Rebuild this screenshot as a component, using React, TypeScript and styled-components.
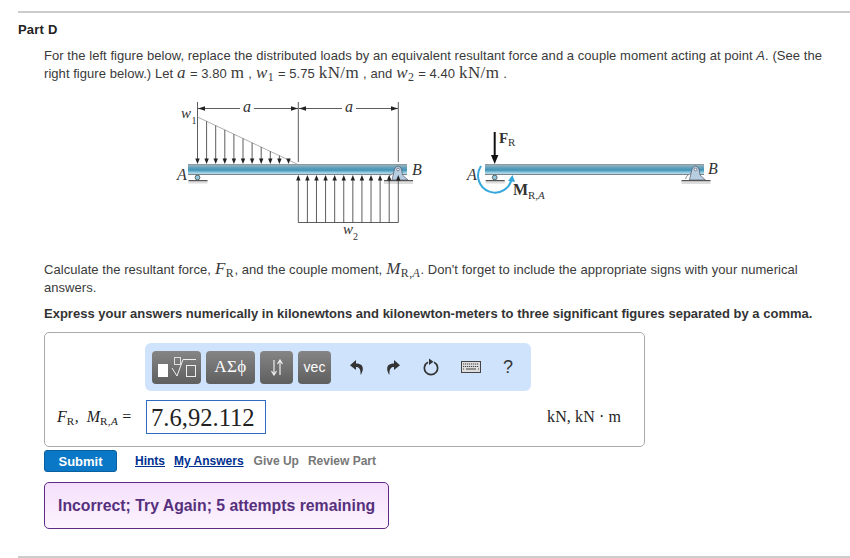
import styled, { createGlobalStyle } from "styled-components";

const GlobalStyle = createGlobalStyle`
  html, body {
    margin: 0;
    padding: 0;
    background: #fff;
    overflow: hidden;
  }
  body {
    font-family: "Liberation Sans", Arial, sans-serif;
    color: #333;
  }
`;

const Page = styled.main`
  width: 850px;
  height: 558px;
  padding: 11px 0 0 18px;
  box-sizing: border-box;
  display: flex;
  flex-direction: column;
`;

const Rule = styled.hr<{ $top?: number }>`
  margin: ${(p) => p.$top ?? 0}px 0 0;
  height: 2px;
  border: 0;
  background: #ccc;
  flex: none;
`;

const PartTitle = styled.h2`
  margin: 9px 0 0;
  font-size: 13px;
  line-height: 15px;
  font-weight: bold;
  color: #222;
  letter-spacing: 0.2px;
`;

const Body = styled.section`
  padding-left: 26px;
  display: flex;
  flex-direction: column;
  align-items: flex-start;
`;

const Paragraph = styled.p<{ $top: number; $line: number }>`
  margin: ${(p) => p.$top}px 0 0;
  width: 790px;
  font-size: 13px;
  line-height: ${(p) => p.$line}px;
  letter-spacing: 0.05px;
  color: #3a3a3a;
`;

const Instruction = styled.p`
  margin: 9px 0 0;
  font-size: 13px;
  line-height: 16px;
  font-weight: bold;
  letter-spacing: 0.01px;
  color: #333;
`;

const Math = styled.span`
  font-family: "Liberation Serif", "Times New Roman", serif;
  font-size: 17px;
  line-height: 1;
  letter-spacing: 0.4px;
  margin: 0 0.3px;
`;

const Var = styled.i`
  font-family: "Liberation Serif", "Times New Roman", serif;
`;

const Sub = styled.sub`
  font-size: 0.7em;
  line-height: 0;
  vertical-align: -0.25em;
  letter-spacing: 0.4px;
`;

const FigureSvg = styled.svg`
  display: block;
  width: 580px;
  height: 150px;
  margin: 14px 0 0 116px;
  flex: none;
`;

const EditorBox = styled.div`
  margin-top: 10px;
  width: 601px;
  height: 115px;
  box-sizing: border-box;
  border: 1px solid #aaa;
  border-radius: 5px;
  padding: 10px 23px 0 12px;
  display: flex;
  flex-direction: column;
`;

const Toolbar = styled.div`
  margin-left: 88px;
  width: 386px;
  height: 48px;
  box-sizing: border-box;
  padding: 7px;
  background: #cfe4fc;
  border-radius: 6px;
  display: flex;
  align-items: center;
`;

const ToolButton = styled.div<{ $w: number }>`
  width: ${(p) => p.$w}px;
  height: 33px;
  margin-right: 5px;
  flex: none;
  border-radius: 4px;
  background: linear-gradient(#858585, #5f5f5f);
  color: #fff;
  display: flex;
  align-items: center;
  justify-content: center;
`;

const SerifLabel = styled.span`
  font-family: "Liberation Serif", serif;
  font-size: 17px;
  letter-spacing: 0.4px;
`;

const SansLabel = styled.span`
  font-size: 14px;
`;

const ToolIcons = styled.div`
  margin-left: 2px;
  flex: 1;
  display: flex;
  justify-content: space-between;
  align-items: center;
  padding: 0 11px 0 12px;
  color: #333;
`;

const Help = styled.span`
  font-size: 18px;
  color: #333;
  width: 10px;
  text-align: center;
`;

const AnswerRow = styled.div`
  margin-top: 9px;
  display: flex;
  align-items: center;
`;

const AnswerLabel = styled.div`
  width: 89px;
  flex: none;
  font-family: "Liberation Serif", serif;
  font-size: 16px;
  white-space: nowrap;
  color: #222;
`;

const LabelGap = styled.span`
  margin-left: 4px;
`;

const AnswerInput = styled.div`
  width: 120px;
  height: 34px;
  box-sizing: border-box;
  border: 1px solid #2f6bc0;
  padding-left: 4px;
  font-family: "Liberation Serif", serif;
  font-size: 24.6px;
  line-height: 33px;
  color: #222;
`;

const Units = styled.div`
  margin-left: auto;
  font-family: "Liberation Serif", serif;
  font-size: 16px;
  letter-spacing: 0.1px;
  color: #222;
`;

const ActionRow = styled.div`
  margin-top: 3px;
  display: flex;
  align-items: center;
  font-size: 12px;
  font-weight: bold;
`;

const SubmitButton = styled.button`
  width: 73px;
  height: 22px;
  padding: 0;
  margin-right: 18px;
  border: 1px solid #0a5f9e;
  border-radius: 3px;
  background: #0b78c7;
  color: #fff;
  font: bold 13px "Liberation Sans", sans-serif;
`;

const ActionLink = styled.span<{ $active?: boolean; $gap: number }>`
  margin-right: ${(p) => p.$gap}px;
  color: ${(p) => (p.$active ? "#00308f" : "#777")};
  text-decoration: ${(p) => (p.$active ? "underline" : "none")};
`;

const Feedback = styled.div`
  margin-top: 10px;
  width: 345px;
  height: 47px;
  box-sizing: border-box;
  border: 1px solid #5f2a85;
  border-radius: 5px;
  background: linear-gradient(#f4dffb, #fdf4ff);
  padding-left: 13px;
  display: flex;
  align-items: center;
  font-size: 15.8px;
  font-weight: bold;
  color: #56307c;
  white-space: nowrap;
`;

const dimStroke = "#333";

function ArrowHead({ x, y, dir }: { x: number; y: number; dir: "up" | "down" | "left" | "right" }) {
  const points = {
    up: `${x},${y} ${x - 2.2},${y + 5.5} ${x + 2.2},${y + 5.5}`,
    down: `${x},${y} ${x - 2.2},${y - 5.5} ${x + 2.2},${y - 5.5}`,
    left: `${x},${y} ${x + 7},${y - 2.2} ${x + 7},${y + 2.2}`,
    right: `${x},${y} ${x - 7},${y - 2.2} ${x - 7},${y + 2.2}`,
  }[dir];
  return <polygon points={points} fill="#222" />;
}

function Beam({ x }: { x: number }) {
  return (
    <>
      <rect x={x} y={163} width={219} height={11} fill="url(#beam)" />
      <rect x={x} y={163} width={219} height={1} fill="#8c9aa0" />
      <rect x={x} y={173} width={219} height={1} fill="#78868c" />
    </>
  );
}

function Roller({ x }: { x: number }) {
  return (
    <>
      <circle cx={x} cy={176.5} r={2.4} fill="#8fc7dc" stroke="#333" strokeWidth={0.7} />
      <rect x={x - 9} y={179} width={19} height={1.5} fill="#555" />
      <rect x={x - 9} y={180.5} width={19} height={2} fill="#ddd" />
    </>
  );
}

function Pin({ x }: { x: number }) {
  return (
    <>
      <path d={`M${x - 10} 178 Q${x - 8} 172 ${x - 3} 173`} fill="#fff" stroke="#445" strokeWidth={0.6} />
      <path
        d={`M${x - 6} 179 L${x - 3.5} 168 Q${x} 162 ${x + 3.5} 168 L${x + 4.5} 174 L${x + 10} 179 Z`}
        fill="#b7cde0"
        stroke="#445"
        strokeWidth={0.6}
      />
      <circle cx={x} cy={168.5} r={1.3} fill="#fff" stroke="#445" strokeWidth={0.6} />
      <rect x={x - 14} y={179} width={29} height={1.5} fill="#555" />
      <rect x={x - 14} y={180.5} width={29} height={2.5} fill="#ddd" />
    </>
  );
}

const downXs = Array.from({ length: 11 }, (_, i) => 197.5 + i * 9.1);
const upXs = Array.from({ length: 12 }, (_, i) => 298.3 + i * 9.09);

function Figure() {
  return (
    <FigureSvg viewBox="160 95 580 150">
      <defs>
        <linearGradient id="beam" x1="0" y1="0" x2="0" y2="1">
          <stop offset="0" stopColor="#a9bcc4" />
          <stop offset="0.3" stopColor="#6ba3ba" />
          <stop offset="0.55" stopColor="#3f93b8" />
          <stop offset="0.85" stopColor="#b4dcea" />
          <stop offset="1" stopColor="#7f9aa5" />
        </linearGradient>
      </defs>

      {/* left figure */}
      <Beam x={188} />
      <Roller x={197.5} />
      <Pin x={398} />
      <g stroke={dimStroke} strokeWidth={0.8} fill="none">
        <line x1={197.5} y1={101} x2={197.5} y2={116} />
        <line x1={298.3} y1={101} x2={298.3} y2={161} />
        <line x1={398.3} y1={101} x2={398.3} y2={161} />
        <line x1={198} y1={107.5} x2={240} y2={107.5} />
        <line x1={254} y1={107.5} x2={298} y2={107.5} />
        <line x1={299} y1={107.5} x2={342} y2={107.5} />
        <line x1={356} y1={107.5} x2={398} y2={107.5} />
        <line x1={197.5} y1={116} x2={297} y2={163} stroke="#999" />
        {downXs.map((x, i) => (
          <line key={x} x1={x} y1={116 + i * 4.3} x2={x} y2={160} />
        ))}
        {upXs.map((x) => (
          <line key={x} x1={x} y1={179} x2={x} y2={221.5} />
        ))}
        <line x1={298.3} y1={221.5} x2={398.3} y2={221.5} />
      </g>
      <ArrowHead x={198} y={107.5} dir="left" />
      <ArrowHead x={298} y={107.5} dir="right" />
      <ArrowHead x={299} y={107.5} dir="left" />
      <ArrowHead x={398} y={107.5} dir="right" />
      {downXs.map((x) => (
        <ArrowHead key={x} x={x} y={163} dir="down" />
      ))}
      {upXs.map((x) => (
        <ArrowHead key={x} x={x} y={174} dir="up" />
      ))}
      <g fontFamily="'Liberation Serif', serif" fill="#333">
        <text x={243} y={111} fontSize={16} fontStyle="italic">a</text>
        <text x={345} y={111} fontSize={16} fontStyle="italic">a</text>
        <text x={181} y={117} fontSize={15} fontStyle="italic">w</text>
        <text x={191.5} y={123} fontSize={10}>1</text>
        <text x={177} y={179} fontSize={16} fontStyle="italic">A</text>
        <text x={412} y={174} fontSize={16} fontStyle="italic">B</text>
        <text x={343} y={233} fontSize={15} fontStyle="italic">w</text>
        <text x={353} y={239} fontSize={10}>2</text>
      </g>

      {/* right figure */}
      <Beam x={485} />
      <line x1={494.7} y1={131} x2={494.7} y2={156} stroke="#111" strokeWidth={2} />
      <polygon points="494.7,163 491,154 498.4,154" fill="#111" />
      <Roller x={494.7} />
      <Pin x={695.5} />
      <path d="M481 165 A17 17 0 1 0 512 176" fill="none" stroke="#35a7dc" strokeWidth={2} />
      <polygon points="512.5,174 508,180 515,181" fill="#35a7dc" />
      <g fontFamily="'Liberation Serif', serif" fill="#333">
        <text x={499} y={142} fontSize={15} fontWeight="bold">F</text>
        <text x={508} y={145} fontSize={11}>R</text>
        <text x={467} y={179} fontSize={16} fontStyle="italic">A</text>
        <text x={708} y={173} fontSize={16} fontStyle="italic">B</text>
        <text x={513} y={194} fontSize={16} fontWeight="bold">M</text>
        <text x={528} y={198} fontSize={11}>R,<tspan fontStyle="italic">A</tspan></text>
      </g>
    </FigureSvg>
  );
}

function TemplateIcon() {
  return (
    <svg width="42" height="27" viewBox="0 0 42 27" fill="none">
      <rect x="2" y="10" width="10" height="13" fill="#fff" />
      <rect x="18.5" y="3.5" width="6" height="7" stroke="#ddd" strokeWidth="1" />
      <path d="M16 14 L21 22 L27 5.5 H40" stroke="#eee" strokeWidth="1" />
      <rect x="30.5" y="11.5" width="9" height="11" stroke="#eee" strokeWidth="1" />
    </svg>
  );
}

function ArrowsIcon() {
  return (
    <svg width="14" height="17" viewBox="0 0 14 17" fill="none" stroke="#eee" strokeWidth="1.2">
      <path d="M4 1 V15 M1.5 12 L4 16 L6.5 12" />
      <path d="M10 16 V2 M7.5 5 L10 1 L12.5 5" />
    </svg>
  );
}

function UndoIcon({ flip }: { flip?: boolean }) {
  return (
    <svg width="14" height="15" viewBox="0 0 14 15" style={flip ? { transform: "scaleX(-1)" } : undefined}>
      <path d="M6 0 L0 5.2 L6 10 V7 C9 7 11 9 10.5 15 C13.5 11 15 3.5 6 3.5 Z" fill="#333" />
    </svg>
  );
}

function ResetIcon() {
  return (
    <svg width="16" height="18" viewBox="0 0 16 18" fill="none">
      <path d="M11 4.2 A6.6 6.6 0 1 1 5 4.2" stroke="#333" strokeWidth="1.7" />
      <polygon points="6,0.5 6,7 10.5,3.7" fill="#333" />
    </svg>
  );
}

function KeyboardIcon() {
  return (
    <svg width="20" height="12" viewBox="0 0 20 12" fill="none">
      <rect x="0.5" y="0.5" width="19" height="11" fill="#ddd" stroke="#444" />
      <path d="M2 3 H18 M2 5.5 H18" stroke="#444" strokeWidth="1.2" strokeDasharray="1.2 0.8" />
      <path d="M2 8 H3 M5 8 H15 M17 8 H18" stroke="#444" strokeWidth="1.2" />
    </svg>
  );
}

function App() {
  return (
    <>
      <GlobalStyle />
      <Page>
        <Rule />
        <PartTitle>Part D</PartTitle>
        <Body>
          <Paragraph $top={11} $line={16}>
            For the left figure below, replace the distributed loads by an equivalent resultant force and a couple moment acting at point <i>A</i>. (See the right figure below.) Let{" "}
            <Math><Var>a</Var></Math> = 3.80 <Math>m</Math> , <Math><Var>w</Var><Sub>1</Sub></Math> = 5.75 <Math>kN/m</Math> , and <Math><Var>w</Var><Sub>2</Sub></Math> = 4.40 <Math>kN/m</Math> .
          </Paragraph>
          <Figure />
          <Paragraph $top={14} $line={18}>
            Calculate the resultant force, <Math><Var>F</Var><Sub>R</Sub></Math>, and the couple moment, <Math><Var>M</Var><Sub>R,<i>A</i></Sub></Math>. Don't forget to include the appropriate signs with your numerical answers.
          </Paragraph>
          <Instruction>Express your answers numerically in kilonewtons and kilonewton-meters to three significant figures separated by a comma.</Instruction>
          <EditorBox>
            <Toolbar>
              <ToolButton $w={49}><TemplateIcon /></ToolButton>
              <ToolButton $w={49}><SerifLabel>ΑΣϕ</SerifLabel></ToolButton>
              <ToolButton $w={33}><ArrowsIcon /></ToolButton>
              <ToolButton $w={33}><SansLabel>vec</SansLabel></ToolButton>
              <ToolIcons>
                <UndoIcon />
                <UndoIcon flip />
                <ResetIcon />
                <KeyboardIcon />
                <Help>?</Help>
              </ToolIcons>
            </Toolbar>
            <AnswerRow>
              <AnswerLabel>
                <Var>F</Var><Sub>R</Sub>,<LabelGap /> <Var>M</Var><Sub>R,<i>A</i></Sub> =
              </AnswerLabel>
              <AnswerInput>7.6,92.112</AnswerInput>
              <Units>kN, kN · m</Units>
            </AnswerRow>
          </EditorBox>
          <ActionRow>
            <SubmitButton>Submit</SubmitButton>
            <ActionLink $active $gap={9}>Hints</ActionLink>
            <ActionLink $active $gap={10}>My Answers</ActionLink>
            <ActionLink $gap={9}>Give Up</ActionLink>
            <ActionLink $gap={0}>Review Part</ActionLink>
          </ActionRow>
          <Feedback>Incorrect; Try Again; 5 attempts remaining</Feedback>
        </Body>
        <Rule $top={27} />
      </Page>
    </>
  );
}

export default App;
